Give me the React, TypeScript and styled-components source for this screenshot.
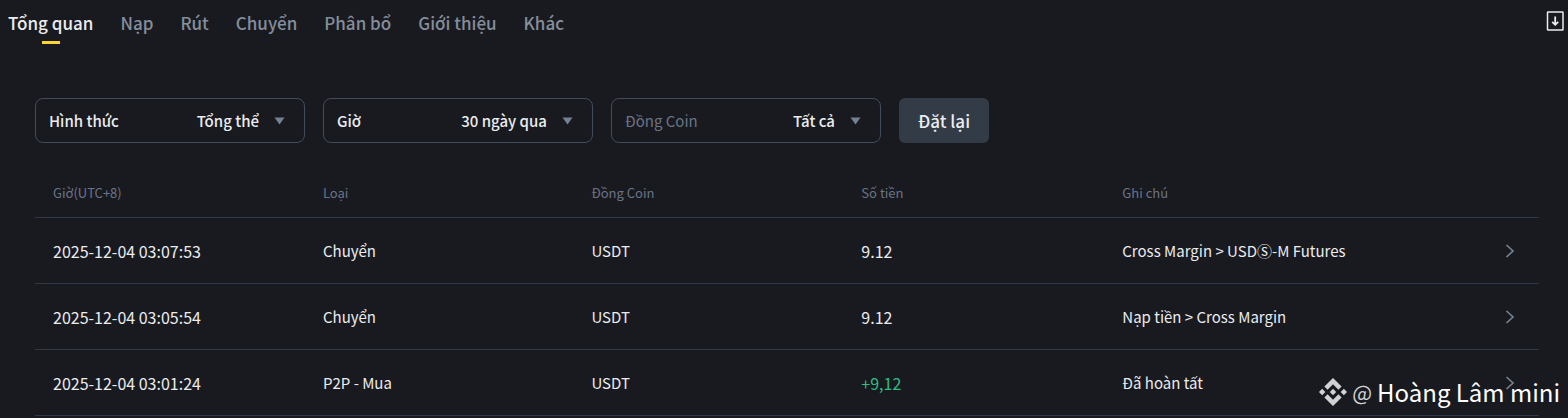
import React from "react";
import styled, { createGlobalStyle } from "styled-components";

const sans = `"Noto Sans CJK SC", "Noto Sans", sans-serif`;

const GlobalStyle = createGlobalStyle`
  *, *::before, *::after { box-sizing: border-box; }
  body {
    margin: 0;
    background: #191a1f;
    color: #eaecef;
    font-family: ${sans};
    font-size: 16px;
    line-height: 24px;
  }
  button, select { font: inherit; color: inherit; }
`;

const Page = styled.div`
  position: relative;
  min-height: 100vh;
`;

const TopBar = styled.header`
  display: flex;
  align-items: flex-start;
  justify-content: space-between;
  padding: 8px 4px 0 8px;
`;

const Tabs = styled.nav`
  display: flex;
  gap: 27px;
`;

const Tab = styled.a<{ $active?: boolean }>`
  display: flex;
  flex-direction: column;
  align-items: center;
  font-size: 17px;
  line-height: 30px;
  font-weight: 500;
  text-decoration: none;
  white-space: nowrap;
  color: ${(p) => (p.$active ? "#eaecef" : "#848e9c")};

  &::after {
    content: "";
    width: 18px;
    height: 3px;
    margin-top: 3px;
    background: ${(p) => (p.$active ? "#fcd535" : "transparent")};
  }
`;

const ExportButton = styled.button`
  display: flex;
  margin-top: 3px;
  padding: 0;
  border: 0;
  background: none;
  cursor: pointer;
`;

const Content = styled.main`
  padding: 54px 29px 0 35px;
`;

const Filters = styled.form`
  display: flex;
  flex-wrap: wrap;
  gap: 18px;
`;

const Field = styled.label<{ $muted?: boolean }>`
  display: flex;
  align-items: center;
  width: 270px;
  height: 45px;
  padding: 0 19px 0 13px;
  border: 1px solid #434c5a;
  border-radius: 8px;
  font-size: 15px;
  font-weight: ${(p) => (p.$muted ? 400 : 500)};
  color: ${(p) => (p.$muted ? "#6a7488" : "#eaecef")};
  white-space: nowrap;
`;

const FieldSelect = styled.select`
  flex: 1;
  min-width: 0;
  appearance: none;
  border: 0;
  padding: 0;
  margin-right: 15px;
  background: transparent;
  font-weight: 500;
  color: #eaecef;
  text-align: right;
  text-align-last: right;
  outline: 0;
`;

const ResetButton = styled.button`
  height: 45px;
  width: 90px;
  padding: 0;
  border: 0;
  border-radius: 6px;
  background: #333b47;
  font-size: 17px;
  font-weight: 500;
  cursor: pointer;
`;

const History = styled.table`
  width: 100%;
  margin-top: 27px;
  border-collapse: separate;
  border-spacing: 0;
  table-layout: fixed;
`;

const Col = styled.col<{ $share?: number }>`
  width: ${(p) => (p.$share ? `${p.$share}%` : "auto")};
`;

const HeadCell = styled.th`
  height: 48px;
  padding: 0 0 2px 18px;
  border-bottom: 1px solid #2f3844;
  font-size: 13px;
  font-weight: 400;
  text-align: left;
  color: #6a7488;
`;

const Cell = styled.td<{ $numeric?: boolean; $positive?: boolean }>`
  height: 66px;
  padding: 0 0 0 18px;
  border-bottom: 1px solid #2f3844;
  font-size: ${(p) => (p.$numeric ? 16 : 15)}px;
  color: ${(p) => (p.$positive ? "#2ebd85" : "#eaecef")};
`;

const Note = styled.div`
  display: flex;
  align-items: center;
  justify-content: space-between;
  padding-right: 24px;
`;

const RowButton = styled.button`
  display: flex;
  padding: 0;
  border: 0;
  background: none;
  cursor: pointer;
`;

const Watermark = styled.div`
  position: absolute;
  right: 8px;
  bottom: 8px;
  display: flex;
  align-items: center;
  height: 36px;
  color: #fff;
  font-size: 24px;
  white-space: nowrap;
  pointer-events: none;
`;

const At = styled.span`
  margin: 0 5px;
  font-size: 21px;
  color: #d0d1d3;
`;

const Caret = () => (
  <svg width="11" height="8" viewBox="0 0 11 8" aria-hidden="true">
    <path d="M0.5 0.5h10L5.5 7.5z" fill="#76808f" />
  </svg>
);

const Chevron = () => (
  <svg width="10" height="14" viewBox="0 0 10 14" fill="none" aria-hidden="true">
    <path d="M1.5 1L8 7l-6.500 6" stroke="#76808f" strokeWidth="1.7" />
  </svg>
);

const ExportIcon = () => (
  <svg width="18" height="20" viewBox="0 0 18 20" fill="none" aria-hidden="true">
    <rect x="1.500" y="1" width="15.500" height="18" rx="0.500" stroke="#eaecef" strokeWidth="1.500" />
    <path d="M9.200 5.500v8M6.200 10.800l3 3 3-3" stroke="#eaecef" strokeWidth="1.800" />
  </svg>
);

const BinanceMark = () => (
  <svg width="28" height="28" viewBox="0 0 126.610 126.610" fill="#d0d1d3" aria-hidden="true">
    <path d="M38.730 53.200l24.590-24.580 24.600 24.600 14.300-14.310L63.320 0 24.420 38.900zM0 63.310L14.300 49l14.310 14.310L14.300 77.610zM38.730 73.410l24.590 24.590 24.600-24.600 14.310 14.290-38.910 38.920-38.900-38.880zM98 63.310L112.300 49l14.310 14.310-14.310 14.300zM77.830 63.300L63.320 48.780 52.590 59.510l-3.780 3.790 14.510 14.510z" />
  </svg>
);

const tabs = ["Tổng quan", "Nạp", "Rút", "Chuyển", "Phân bổ", "Giới thiệu", "Khác"];

const filters = [
  { label: "Hình thức", value: "Tổng thể" },
  { label: "Giờ", value: "30 ngày qua" },
  { label: "Đồng Coin", value: "Tất cả", muted: true },
];

const columns = [
  { title: "Giờ(UTC+8)", share: 17.95 },
  { title: "Loại", share: 17.85 },
  { title: "Đồng Coin", share: 17.95 },
  { title: "Số tiền", share: 17.35 },
  { title: "Ghi chú" },
];

const rows = [
  { time: "2025-12-04 03:07:53", type: "Chuyển", coin: "USDT", amount: "9.12", note: "Cross Margin > USDⓈ-M Futures" },
  { time: "2025-12-04 03:05:54", type: "Chuyển", coin: "USDT", amount: "9.12", note: "Nạp tiền > Cross Margin" },
  { time: "2025-12-04 03:01:24", type: "P2P - Mua", coin: "USDT", amount: "+9,12", note: "Đã hoàn tất" },
];

export default function App() {
  return (
    <Page>
      <GlobalStyle />
      <TopBar>
        <Tabs>
          {tabs.map((name, i) => (
            <Tab key={name} href="#" $active={i === 0}>
              {name}
            </Tab>
          ))}
        </Tabs>
        <ExportButton type="button" aria-label="Xuất">
          <ExportIcon />
        </ExportButton>
      </TopBar>
      <Content>
        <Filters>
          {filters.map((f) => (
            <Field key={f.label} $muted={f.muted}>
              {f.label}
              <FieldSelect>
                <option>{f.value}</option>
              </FieldSelect>
              <Caret />
            </Field>
          ))}
          <ResetButton type="button">Đặt lại</ResetButton>
        </Filters>
        <History>
          <colgroup>
            {columns.map((c) => (
              <Col key={c.title} $share={c.share} />
            ))}
          </colgroup>
          <thead>
            <tr>
              {columns.map((c) => (
                <HeadCell key={c.title} scope="col">
                  {c.title}
                </HeadCell>
              ))}
            </tr>
          </thead>
          <tbody>
            {rows.map((r) => (
              <tr key={r.time}>
                <Cell $numeric>{r.time}</Cell>
                <Cell>{r.type}</Cell>
                <Cell>{r.coin}</Cell>
                <Cell $numeric $positive={r.amount.startsWith("+")}>
                  {r.amount}
                </Cell>
                <Cell>
                  <Note>
                    {r.note}
                    <RowButton type="button" aria-label="Chi tiết">
                      <Chevron />
                    </RowButton>
                  </Note>
                </Cell>
              </tr>
            ))}
          </tbody>
        </History>
      </Content>
      <Watermark>
        <BinanceMark />
        <At>@</At>
        Hoàng Lâm mini
      </Watermark>
    </Page>
  );
}
